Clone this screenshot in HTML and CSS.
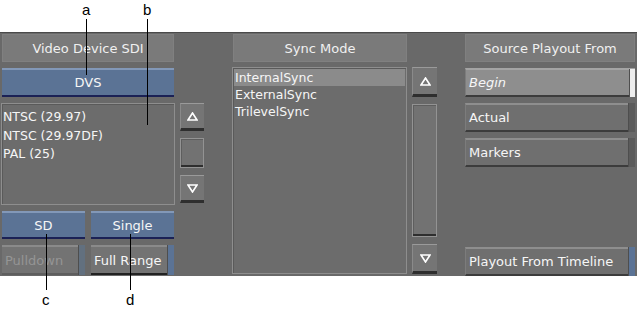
FILE: index.html
```html
<!DOCTYPE html>
<html lang="en">
<head>
    <meta charset="UTF-8">
    <title>Video Device SDI</title>
    <link rel="stylesheet" href="styles.css">
</head>
<body>
  <div class="figure">
    <div class="top-band"></div>

    <div class="panel">
      <!-- left column -->
      <div class="col col-left">
        <div class="header">Video Device SDI</div>
        <div class="btn blue dvs">DVS</div>
        <div class="list list-left">
          <div class="item">NTSC (29.97)</div>
          <div class="item">NTSC (29.97DF)</div>
          <div class="item">PAL (25)</div>
        </div>
        <div class="pair">
          <div class="btn blue half">SD</div>
          <div class="btn blue half">Single</div>
        </div>
        <div class="pair">
          <div class="btn toggle half disabled"><span>Pulldown</span><i class="strip dim"></i></div>
          <div class="btn toggle half"><span>Full Range</span><i class="strip on"></i></div>
        </div>
      </div>

      <div class="col scroll scroll-left">
        <div class="sbtn"><svg width="11" height="9" viewBox="0 0 11 9"><path d="M5.5 1 L10 8 L1 8 Z" fill="none" stroke="#fff" stroke-width="1.6"/></svg></div>
        <div class="thumb"></div>
        <div class="sbtn"><svg width="11" height="9" viewBox="0 0 11 9"><path d="M1 1 L10 1 L5.5 8 Z" fill="none" stroke="#fff" stroke-width="1.6"/></svg></div>
      </div>

      <!-- middle column -->
      <div class="col col-mid">
        <div class="header">Sync Mode</div>
        <div class="list list-mid">
          <div class="item sel">InternalSync</div>
          <div class="item">ExternalSync</div>
          <div class="item">TrilevelSync</div>
        </div>
      </div>

      <div class="col scroll scroll-mid">
        <div class="sbtn tall"><svg width="11" height="9" viewBox="0 0 11 9"><path d="M5.5 1 L10 8 L1 8 Z" fill="none" stroke="#fff" stroke-width="1.6"/></svg></div>
        <div class="thumb long"></div>
        <div class="sbtn tall"><svg width="11" height="9" viewBox="0 0 11 9"><path d="M1 1 L10 1 L5.5 8 Z" fill="none" stroke="#fff" stroke-width="1.6"/></svg></div>
      </div>

      <!-- right column -->
      <div class="col col-right">
        <div class="header">Source Playout From</div>
        <div class="btn opt selected"><em>Begin</em><i class="strip white"></i></div>
        <div class="btn opt">Actual<i class="strip"></i></div>
        <div class="btn opt">Markers<i class="strip"></i></div>
        <div class="spacer"></div>
        <div class="btn opt">Playout From Timeline<i class="strip on"></i></div>
      </div>
    </div>

    <div class="bottom-band"></div>

    <!-- callouts -->
    <span class="callout label-a">a</span>
    <span class="line line-a"></span>
    <span class="callout label-b">b</span>
    <span class="line line-b"></span>
    <span class="callout label-c">c</span>
    <span class="line line-c"></span>
    <span class="callout label-d">d</span>
    <span class="line line-d"></span>
  </div>
</body>
</html>
```

FILE: styles.css
```css
* {
  box-sizing: border-box;
}
body {
  margin: 0;
  background: #fff;
  font-family: "DejaVu Sans", "Liberation Sans", sans-serif;
}
.figure {
  position: relative;
  width: 637px;
  height: 309px;
  overflow: hidden;
}
.top-band {
  height: 32px;
}
.bottom-band {
  height: 33px;
}

.panel {
  display: flex;
  height: 244px;
  background: #696969;
  border-top: 1px solid #4a4a4a;
  padding: 1px 0 0 2px;
}
.col {
  display: flex;
  flex-direction: column;
}
.col-left {
  width: 172px;
  gap: 6px;
}
.col-mid {
  width: 174px;
  margin-left: 29px;
  gap: 5px;
}
.col-right {
  width: 170px;
  margin-left: 28px;
  gap: 6px;
}

.header {
  height: 28px;
  background: #7a7a7a;
  border: 1px solid #808080;
  color: #f0f0f0;
  font-size: 13px;
  display: flex;
  align-items: center;
  justify-content: center;
}

.btn {
  height: 29px;
  color: #f6f6f6;
  font-size: 13px;
  display: flex;
  align-items: center;
  position: relative;
}
.blue {
  justify-content: center;
  background: #5b7395;
  border-top: 2px solid #8298b8;
  border-bottom: 2px solid #1b2155;
}
.dvs {
  height: 29px;
}
.pair {
  display: flex;
  justify-content: space-between;
}
.half {
  width: 83px;
  height: 28px;
}
.toggle {
  background: #737373;
  border-top: 2px solid #8a8a8a;
  border-bottom: 2px solid #222;
  padding-left: 3px;
  height: 30px;
}
.toggle.disabled {
  color: #959595;
  border-bottom-color: #5e5e5e;
}

.strip {
  position: absolute;
  right: 0;
  top: -2px;
  bottom: -2px;
  width: 7px;
  background: #5b5b5b;
  border-left: 1px solid #4e4e4e;
}
.strip.on {
  background: #5b7395;
}
.strip.dim {
  background: #62707f;
}
.strip.white {
  background: #ededed;
  width: 6px;
  top: -1px;
}

.list {
  background: #6c6c6c;
  border: 1px solid #8e8e8e;
  box-shadow: inset 1px 1px 0 #5a5a5a;
  color: #f6f6f6;
  font-size: 12.5px;
  padding: 2px 1px;
}
.list-left {
  height: 102px;
  margin-left: -1px;
  width: 174px;
  padding-top: 4px;
}
.list-left .item {
  height: 18.5px;
  line-height: 18.5px;
}
.list-mid {
  flex: 1;
  margin-left: -1px;
  margin-bottom: 2px;
  padding-top: 1px;
}
.list-mid .item {
  height: 17px;
  line-height: 17px;
  padding-left: 1px;
}
.item.sel {
  background: #8b8b8b;
}

.scroll {
  gap: 7px;
}
.scroll-left {
  width: 24px;
  margin-left: 6px;
  padding-top: 69px;
}
.scroll-mid {
  width: 25px;
  margin-left: 5px;
  padding-top: 33px;
  padding-bottom: 2px;
}
.sbtn {
  height: 28px;
  background: #757575;
  border-top: 1px solid #9a9a9a;
  border-left: 1px solid #8a8a8a;
  border-bottom: 3px solid #2e2e2e;
  display: flex;
  align-items: center;
  justify-content: center;
}
.sbtn.tall {
  height: 30px;
}
.thumb {
  height: 30px;
  background: #727272;
  border: 1px solid #939393;
  box-shadow: inset 0 -2px 0 #2e2e2e, inset 1px 1px 0 #5e5e5e;
}
.thumb.long {
  flex: 1;
}

.opt {
  background: #6f6f6f;
  border-top: 2px solid #8e8e8e;
  border-left: 1px solid #7c7c7c;
  border-bottom: 2px solid #3c3c3c;
  padding-left: 3px;
  padding-right: 8px;
}
.opt.selected {
  background: #8e8e8e;
  border-top-color: #a4a4a4;
}
.opt em {
  font-style: italic;
}
.spacer {
  flex: 1;
}

.callout {
  position: absolute;
  font-family: "Liberation Sans", sans-serif;
  font-size: 15px;
  color: #000;
  line-height: 1;
}
.line {
  position: absolute;
  width: 1px;
  background: #000;
}
.label-a { left: 82px; top: 2px; }
.line-a { left: 86px; top: 19px; height: 56px; }
.label-b { left: 143px; top: 2px; }
.line-b { left: 147px; top: 19px; height: 106px; }
.label-c { left: 42px; top: 292px; }
.line-c { left: 46px; top: 234px; height: 56px; }
.label-d { left: 126px; top: 292px; }
.line-d { left: 130px; top: 234px; height: 56px; }
```
